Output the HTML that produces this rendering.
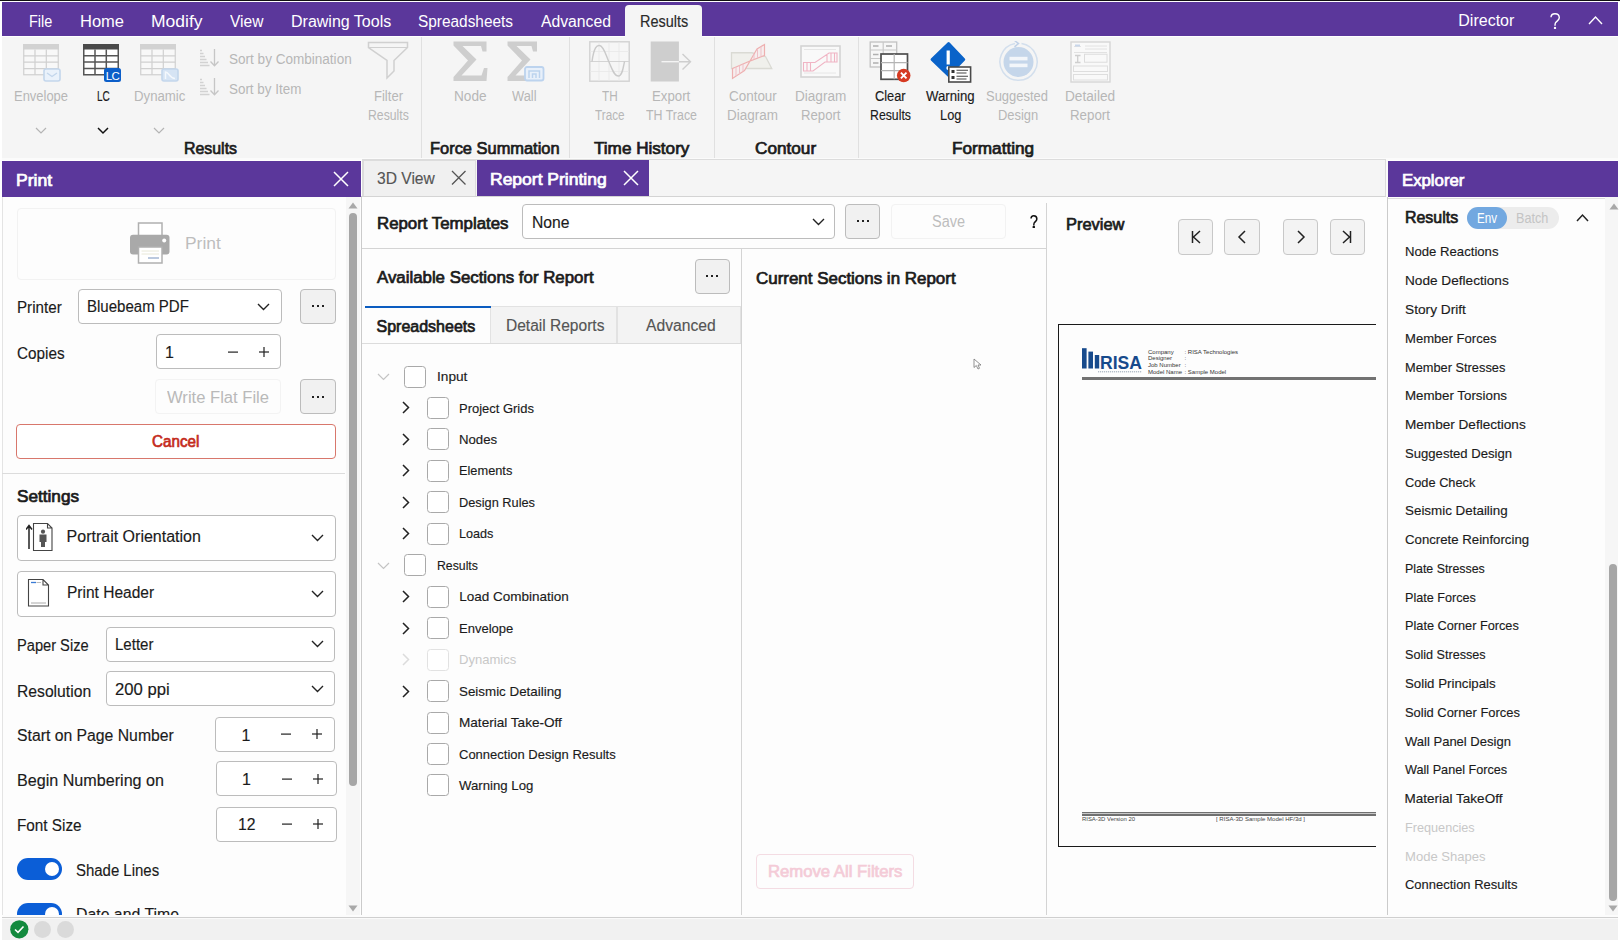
<!DOCTYPE html>
<html><head><meta charset="utf-8"><style>
html,body{margin:0;padding:0;}
body{width:1620px;height:941px;position:relative;overflow:hidden;background:#fff;font-family:"Liberation Sans",sans-serif;}
.a{position:absolute;}
.t{line-height:1;white-space:nowrap;transform-origin:0 50%;}
</style></head><body>
<div class="a" style="left:0px;top:0px;width:1620px;height:1px;background:#111;"></div>
<div class="a" style="left:2px;top:2px;width:1616px;height:34px;background:#5b379b;"></div>
<div class="a" style="left:2px;top:37px;width:1616px;height:120.5px;background:#f5f5f5;"></div>
<div class="a t" style="left:29.00px;top:13.96px;font-size:16px;color:#fff;transform:scaleX(0.9037);">File</div>
<div class="a t" style="left:80.00px;top:13.96px;font-size:16px;color:#fff;transform:scaleX(1.0309);">Home</div>
<div class="a t" style="left:151.00px;top:13.96px;font-size:16px;color:#fff;transform:scaleX(1.0928);">Modify</div>
<div class="a t" style="left:229.60px;top:13.96px;font-size:16px;color:#fff;transform:scaleX(0.9711);">View</div>
<div class="a t" style="left:291.00px;top:13.96px;font-size:16px;color:#fff;">Drawing Tools</div>
<div class="a t" style="left:418.00px;top:13.96px;font-size:16px;color:#fff;transform:scaleX(0.9621);">Spreadsheets</div>
<div class="a t" style="left:541.00px;top:13.96px;font-size:16px;color:#fff;transform:scaleX(0.9836);">Advanced</div>
<div class="a" style="left:625px;top:5px;width:77px;height:32px;background:#f5f5f5;border-radius:4px 4px 0 0;"></div>
<div class="a t" style="left:639.50px;top:13.96px;font-size:16px;color:#2a2a2a;-webkit-text-stroke:0.15px #2a2a2a;transform:scaleX(0.9034);">Results</div>
<div class="a t" style="left:1458.30px;top:13.46px;font-size:16px;color:#fff;">Director</div>
<svg class="a" style="left:1550px;top:12.7px;" width="10" height="16.2" viewBox="0 0 10 16.2"><path d="M1.0,4.374 C1.0,1.62 3.0,0.7 5.0,0.7 C7.5,0.7 9.3,1.944 9.3,4.859999999999999 C9.3,7.29 6.2,8.424 5.5,9.719999999999999 C5.0,10.692 5.0,11.339999999999998 5.0,12.636" fill="none" stroke="#fff" stroke-width="1.4"/><circle cx="5.0" cy="15.01" r="1.19" fill="#fff"/></svg>
<svg class="a" style="left:1586.8px;top:15.0px;" width="17" height="11" viewBox="0 0 17 11"><polyline points="2,9 8.5,2 15,9" fill="none" stroke="#fff" stroke-width="1.4"/></svg>
<svg class="a" style="left:23px;top:43.5px;" width="36" height="32" viewBox="0 0 36 32"><rect x="0.75" y="0.75" width="34.5" height="30" fill="#f8f8f8" stroke="#d0d0d0" stroke-width="1.2"/><rect x="0" y="0" width="36" height="5.5" fill="#d2d2d2"/><path d="M0.75,11.8H35.25M0.75,18.1H35.25M0.75,24.6H35.25M12,5.5V30.75M23.3,5.5V30.75" stroke="#d0d0d0" stroke-width="1.2" fill="none"/></svg>
<svg class="a" style="left:43px;top:68px;" width="18" height="14" viewBox="0 0 18 14"><rect x="1" y="1" width="16" height="12" rx="2" fill="#eaf2fb" stroke="#c3d6ec" stroke-width="1.6"/><polyline points="4,5 9,8.5 14,5" fill="none" stroke="#c3d6ec" stroke-width="1.4"/></svg>
<svg class="a" style="left:83px;top:43.5px;" width="36" height="32" viewBox="0 0 36 32"><rect x="0.75" y="0.75" width="34.5" height="30" fill="#ffffff" stroke="#555555" stroke-width="1.5"/><rect x="0" y="0" width="36" height="5.5" fill="#4a4a4a"/><path d="M0.75,11.8H35.25M0.75,18.1H35.25M0.75,24.6H35.25M12,5.5V30.75M23.3,5.5V30.75" stroke="#555555" stroke-width="1.5" fill="none"/></svg>
<svg class="a" style="left:104px;top:67.5px;" width="17" height="14" viewBox="0 0 17 14"><rect x="0" y="0" width="17" height="14" rx="2.5" fill="#0b5ec9"/><text x="8.5" y="11.6" font-family="Liberation Sans" font-size="11.5" fill="#fff" text-anchor="middle" letter-spacing="-0.6">LC</text></svg>
<svg class="a" style="left:140px;top:43.5px;" width="36" height="32" viewBox="0 0 36 32"><rect x="0.75" y="0.75" width="34.5" height="30" fill="#f8f8f8" stroke="#d0d0d0" stroke-width="1.2"/><rect x="0" y="0" width="36" height="5.5" fill="#d2d2d2"/><path d="M0.75,11.8H35.25M0.75,18.1H35.25M0.75,24.6H35.25M12,5.5V30.75M23.3,5.5V30.75" stroke="#d0d0d0" stroke-width="1.2" fill="none"/></svg>
<svg class="a" style="left:160.5px;top:68px;" width="18" height="14" viewBox="0 0 18 14"><rect x="1" y="1" width="16" height="12" rx="2" fill="#d6e4f4" stroke="#c3d6ec" stroke-width="1.6"/><path d="M4.5,11 V4 C8,4 8,10 14,10.5" fill="none" stroke="#f4f8fc" stroke-width="1.5"/></svg>
<div class="a t" style="left:14.00px;top:88.65px;font-size:14px;color:#b7b7b7;transform:scaleX(0.9250);">Envelope</div>
<div class="a t" style="left:96.60px;top:88.65px;font-size:14px;color:#1b1b1b;-webkit-text-stroke:0.15px #1b1b1b;transform:scaleX(0.7152);">LC</div>
<div class="a t" style="left:133.70px;top:88.65px;font-size:14px;color:#b7b7b7;transform:scaleX(0.9439);">Dynamic</div>
<svg class="a" style="left:34.0px;top:125.5px;" width="14" height="9" viewBox="0 0 14 9"><polyline points="2,2 7.0,7 12,2" fill="none" stroke="#b4b4b4" stroke-width="1.2"/></svg>
<svg class="a" style="left:96.0px;top:125.5px;" width="14" height="9" viewBox="0 0 14 9"><polyline points="2,2 7.0,7 12,2" fill="none" stroke="#111" stroke-width="1.45"/></svg>
<svg class="a" style="left:152.0px;top:125.5px;" width="14" height="9" viewBox="0 0 14 9"><polyline points="2,2 7.0,7 12,2" fill="none" stroke="#b4b4b4" stroke-width="1.2"/></svg>
<svg class="a" style="left:199px;top:48px;" width="21" height="20" viewBox="0 0 21 20"><path d="M1,2.5H3 M1,5.5H4.5 M1,8.5H6 M1,11.5H7.5 M1,14.5H9 M1,17.5H10.5" stroke="#d2d2d2" stroke-width="1.3"/><path d="M15.5,1V17.5 M11.5,13.5L15.5,17.8L19.5,13.5" stroke="#c6c6c6" stroke-width="1.3" fill="none"/></svg>
<svg class="a" style="left:199px;top:77px;" width="21" height="20" viewBox="0 0 21 20"><path d="M1,2.5H3 M1,5.5H4.5 M1,8.5H6 M1,11.5H7.5 M1,14.5H9 M1,17.5H10.5" stroke="#d2d2d2" stroke-width="1.3"/><path d="M15.5,1V17.5 M11.5,13.5L15.5,17.8L19.5,13.5" stroke="#c6c6c6" stroke-width="1.3" fill="none"/></svg>
<div class="a t" style="left:228.80px;top:51.85px;font-size:14px;color:#b7b7b7;transform:scaleX(0.9673);">Sort by Combination</div>
<div class="a t" style="left:228.80px;top:81.85px;font-size:14px;color:#b7b7b7;transform:scaleX(0.9580);">Sort by Item</div>
<svg class="a" style="left:367px;top:41px;" width="43" height="41" viewBox="0 0 43 41"><path d="M1.5,1.5H40.5V6.5L27,19.5V30L20,37V19.5L1.5,6.5Z" fill="none" stroke="#d0d0d0" stroke-width="1.5" stroke-linejoin="miter"/><path d="M1.5,6.5H40.5" stroke="#d0d0d0" stroke-width="1.2"/></svg>
<div class="a t" style="left:374.30px;top:89.35px;font-size:14px;color:#b7b7b7;transform:scaleX(0.9321);">Filter</div>
<div class="a t" style="left:368.40px;top:108.35px;font-size:14px;color:#b7b7b7;transform:scaleX(0.8740);">Results</div>
<div class="a t" style="left:184.00px;top:140.56px;font-size:16px;color:#1b1b1b;-webkit-text-stroke:0.7px #1b1b1b;transform:scaleX(0.9934);">Results</div>
<div class="a" style="left:421px;top:37px;width:1px;height:121px;background:#e0e0e0;"></div>
<div class="a" style="left:569px;top:37px;width:1px;height:121px;background:#e0e0e0;"></div>
<div class="a" style="left:714px;top:37px;width:1px;height:121px;background:#e0e0e0;"></div>
<div class="a" style="left:857.5px;top:37px;width:1px;height:121px;background:#e0e0e0;"></div>
<svg class="a" style="left:453px;top:41px;" width="35" height="41" viewBox="0 0 35 41"><path d="M0.5,0.5H33.5V10.5H29.5L28,5H9.5L23.5,18.5L8.5,34.5H28.5L31,27H34.5L33.5,40H0.5V36L15,19.5L0.5,4.5Z" fill="#cecece"/></svg>
<svg class="a" style="left:506.5px;top:41px;" width="31.5" height="41" viewBox="0 0 31.5 41"><path d="M0.5,0.5H30.0V10.5H26.0L24.5,5H9.5L23.5,18.5L8.5,34.5H25.0L27.5,27H31.0L30.0,40H0.5V36L15,19.5L0.5,4.5Z" fill="#cecece"/></svg>
<svg class="a" style="left:524px;top:66px;" width="20.5" height="15.5" viewBox="0 0 20.5 15.5"><rect x="1" y="1" width="18.5" height="13.5" rx="2" fill="#e8f0fa" stroke="#bcd3ee" stroke-width="1.8"/><path d="M5,12V5H15.5V12 M8.5,12V8H12V12" fill="none" stroke="#bcd3ee" stroke-width="1.5"/></svg>
<div class="a t" style="left:453.70px;top:89.45px;font-size:14px;color:#b7b7b7;transform:scaleX(0.9740);">Node</div>
<div class="a t" style="left:511.70px;top:89.45px;font-size:14px;color:#b7b7b7;transform:scaleX(0.9213);">Wall</div>
<div class="a t" style="left:430.20px;top:140.56px;font-size:16px;color:#1b1b1b;-webkit-text-stroke:0.7px #1b1b1b;transform:scaleX(1.0264);">Force Summation</div>
<svg class="a" style="left:589px;top:41px;" width="41" height="41" viewBox="0 0 41 41"><rect x="0.8" y="0.8" width="39.4" height="39.4" fill="#f6f6f6" stroke="#d2d2d2" stroke-width="1.4"/><path d="M10,1V40M20,1V40M30,1V40M1,10.5H40M1,30.5H40" stroke="#e8e8e8" stroke-width="0.8"/><path d="M1,20.5H40" stroke="#d4d4d4" stroke-width="1"/><path d="M3,20.5 C5,6 8,4 10.5,4.5 C15,5 17,15 20,21 C23,28 25,35 29.5,35 C33,35 34,28 35.5,20.5" fill="none" stroke="#cacaca" stroke-width="1.4"/></svg>
<svg class="a" style="left:650px;top:41px;" width="42" height="41" viewBox="0 0 42 41"><rect x="0.7" y="0.5" width="28.2" height="40" fill="#cecece"/><path d="M11.5,20.7H40" stroke="#f6f6f6" stroke-width="1.3"/><path d="M28.9,20.7H40.5 M32.5,13L40.5,20.7L32.5,28.5" stroke="#cecece" stroke-width="1.4" fill="none"/></svg>
<div class="a t" style="left:601.55px;top:89.45px;font-size:14px;color:#b7b7b7;transform:scaleX(0.8413);">TH</div>
<div class="a t" style="left:595.00px;top:107.95px;font-size:14px;color:#b7b7b7;transform:scaleX(0.8393);">Trace</div>
<div class="a t" style="left:652.35px;top:89.45px;font-size:14px;color:#b7b7b7;transform:scaleX(0.9465);">Export</div>
<div class="a t" style="left:645.90px;top:107.95px;font-size:14px;color:#b7b7b7;transform:scaleX(0.8859);">TH Trace</div>
<div class="a t" style="left:594.00px;top:140.56px;font-size:16px;color:#1b1b1b;-webkit-text-stroke:0.7px #1b1b1b;transform:scaleX(1.0696);">Time History</div>
<svg class="a" style="left:730px;top:43px;" width="43" height="38" viewBox="0 0 43 38"><path d="M1.5,9.75 L22,9.75 L35.5,13.5 L41.75,25.5 L1.5,25.5 Z" fill="#f0f0ec" stroke="#dadad4" stroke-width="1.3"/><path d="M2.5,25.5 L20,18 L14.5,27.5 L2.5,35.5 Z M20,18 L27,6 L34.5,1.5 L34.5,12.5 Z" fill="#f6eeee" stroke="#eeb0b0" stroke-width="1.2"/><path d="M6,24V33 M9.5,22.5V31 M13,21V28.5 M24,11V16.5 M27.5,6V15 M31,3.5V13.5" stroke="#efc0c8" stroke-width="1"/></svg>
<svg class="a" style="left:799.5px;top:44.5px;" width="41" height="33" viewBox="0 0 41 33"><rect x="1" y="1" width="39" height="31" fill="#f9f9f9" stroke="#d4d4d4" stroke-width="1.6"/><path d="M4,4.5H36 M4,28H36" stroke="#e6e6e6" stroke-width="1"/><path d="M3.5,17.5H15L29,8H37V17H25L13,26H3.5Z M7,17.5V26 M10.5,17.5V26 M27,9V17 M31,8V17 M34.5,8V17" fill="none" stroke="#f0b4c4" stroke-width="1.1"/></svg>
<div class="a t" style="left:728.50px;top:89.45px;font-size:14px;color:#b7b7b7;transform:scaleX(0.9597);">Contour</div>
<div class="a t" style="left:726.75px;top:107.95px;font-size:14px;color:#b7b7b7;transform:scaleX(0.9621);">Diagram</div>
<div class="a t" style="left:794.75px;top:89.45px;font-size:14px;color:#b7b7b7;transform:scaleX(0.9696);">Diagram</div>
<div class="a t" style="left:801.05px;top:107.95px;font-size:14px;color:#b7b7b7;transform:scaleX(0.9400);">Report</div>
<div class="a t" style="left:755.45px;top:140.56px;font-size:16px;color:#1b1b1b;-webkit-text-stroke:0.7px #1b1b1b;transform:scaleX(1.0734);">Contour</div>
<svg class="a" style="left:869px;top:40.5px;" width="44" height="44" viewBox="0 0 44 44"><rect x="1.2" y="1" width="26.5" height="25" fill="#f7f7f7" stroke="#c2c2c2" stroke-width="1.3"/><path d="M1.2,9H27.7M1.2,17.5H27.7M14.2,1V26" stroke="#c8c8c8" stroke-width="1.2"/><path d="M4,5H9.5M17,5H23M4,13.5H9.5M4,22H9.5" stroke="#b0b0b0" stroke-width="1.6"/><rect x="12" y="13" width="26.5" height="25.3" fill="#fff" stroke="#4e4e4e" stroke-width="1.7"/><path d="M12,21.6H38.5M12,29.7H38.5M25.2,13V38.3" stroke="#b4b4b4" stroke-width="1.2"/><circle cx="34.7" cy="34.5" r="6.8" fill="#d63a22"/><path d="M31.9,31.7L37.5,37.3M37.5,31.7L31.9,37.3" stroke="#fff" stroke-width="1.9"/></svg>
<svg class="a" style="left:929px;top:40.5px;" width="43" height="42" viewBox="0 0 43 42"><path d="M18.6,1.5 Q19.5,0.5 20.6,1.5 L35.8,17.5 Q36.8,18.6 35.8,19.6 L20.6,35.3 Q19.5,36.4 18.4,35.3 L2,19.6 Q1,18.6 2,17.5Z" fill="#0a63c9"/><rect x="17.6" y="9.5" width="3.2" height="14" fill="#fff"/><circle cx="19.2" cy="27" r="1.9" fill="#fff"/><rect x="19.8" y="26" width="21.8" height="15" fill="#fff" stroke="#4a4a4a" stroke-width="1.6"/><rect x="22.5" y="29" width="3" height="3" fill="#333"/><rect x="22.5" y="35" width="3" height="3" fill="#333"/><path d="M27.5,29.3H39M27.5,32H37.5M27.5,35.3H39M27.5,38H37.5" stroke="#444" stroke-width="1.1"/></svg>
<div class="a t" style="left:875.40px;top:89.45px;font-size:14px;color:#1b1b1b;-webkit-text-stroke:0.15px #1b1b1b;transform:scaleX(0.9146);">Clear</div>
<div class="a t" style="left:870.00px;top:107.95px;font-size:14px;color:#1b1b1b;-webkit-text-stroke:0.15px #1b1b1b;transform:scaleX(0.8783);">Results</div>
<div class="a t" style="left:925.65px;top:89.45px;font-size:14px;color:#1b1b1b;-webkit-text-stroke:0.15px #1b1b1b;transform:scaleX(0.9436);">Warning</div>
<div class="a t" style="left:939.60px;top:107.95px;font-size:14px;color:#1b1b1b;-webkit-text-stroke:0.15px #1b1b1b;transform:scaleX(0.9161);">Log</div>
<svg class="a" style="left:997.5px;top:41px;" width="42" height="42" viewBox="0 0 42 42"><path d="M23.5,2.4 A18.6,18.6 0 1 1 17,2.5" fill="none" stroke="#d3dfed" stroke-width="1.5"/><path d="M16.5,-0.5L20.5,2.6L16.5,5.8" fill="none" stroke="#c0d1e7" stroke-width="1.5"/><circle cx="20.5" cy="21" r="15" fill="#c5d6ea"/><rect x="11.5" y="15.8" width="18" height="3.6" fill="#f3f6fa"/><rect x="11.5" y="22.6" width="18" height="3.6" fill="#f3f6fa"/></svg>
<svg class="a" style="left:1069.5px;top:40.5px;" width="42" height="42" viewBox="0 0 42 42"><rect x="1" y="1" width="39" height="40" fill="#f9f9f9" stroke="#d6d6d6" stroke-width="1.4"/><path d="M4,5.5H11 M15,5H37 M15,8H37 M4,11.5H37" stroke="#e2e2e2" stroke-width="1"/><path d="M5,4.5H10" stroke="#c8d6ea" stroke-width="2"/><path d="M5,14.5H10.5M7.7,14.5V21.5M5,21.5H10.5" stroke="#cfcfcf" stroke-width="1.3"/><rect x="14.5" y="13.2" width="22.5" height="8" fill="none" stroke="#dcdcdc" stroke-width="1"/><rect x="3.5" y="25" width="34" height="5.5" fill="none" stroke="#dedede" stroke-width="1"/><rect x="3.5" y="33.5" width="34" height="5.5" fill="none" stroke="#dedede" stroke-width="1"/></svg>
<div class="a t" style="left:986.45px;top:89.45px;font-size:14px;color:#b7b7b7;transform:scaleX(0.9246);">Suggested</div>
<div class="a t" style="left:997.50px;top:107.95px;font-size:14px;color:#b7b7b7;transform:scaleX(0.9224);">Design</div>
<div class="a t" style="left:1064.65px;top:89.45px;font-size:14px;color:#b7b7b7;transform:scaleX(0.9753);">Detailed</div>
<div class="a t" style="left:1070.00px;top:107.95px;font-size:14px;color:#b7b7b7;transform:scaleX(0.9519);">Report</div>
<div class="a t" style="left:952.25px;top:140.56px;font-size:16px;color:#1b1b1b;-webkit-text-stroke:0.7px #1b1b1b;transform:scaleX(1.0736);">Formatting</div>
<div class="a" style="left:2px;top:157.5px;width:1616px;height:2px;background:#fbfbfb;"></div>
<div class="a" style="left:362px;top:159px;width:1024px;height:38px;background:#f5f5f5;border:1px solid #dcdcdc;box-sizing:border-box;"></div>
<div class="a" style="left:2px;top:161px;width:359px;height:36px;background:#5b379b;"></div>
<div class="a t" style="left:16.30px;top:173.36px;font-size:16px;color:#fff;-webkit-text-stroke:0.7px #fff;transform:scaleX(1.0973);">Print</div>
<svg class="a" style="left:333.0px;top:171.0px;" width="16" height="16" viewBox="0 0 16 16"><path d="M1,1 L15,15 M15,1 L1,15" stroke="#fff" stroke-width="1.5"/></svg>
<div class="a" style="left:2px;top:197px;width:359px;height:720px;background:#fdfdfd;"></div>
<div class="a" style="left:2px;top:197px;width:1px;height:720px;background:#e4e4e4;"></div>
<div class="a" style="left:345.5px;top:197px;width:14.5px;height:718px;background:#f6f6f6;"></div>
<svg class="a" style="left:348px;top:202px;" width="10" height="7" viewBox="0 0 10 7"><path d="M0.5,6.5L5,0.5L9.5,6.5Z" fill="#a8a8a8"/></svg>
<div class="a" style="left:349px;top:213px;width:7.5px;height:573px;background:#a6a6a6;border-radius:4px;"></div>
<svg class="a" style="left:348px;top:905.3px;" width="10" height="7" viewBox="0 0 10 7"><path d="M0.5,0.5L5,6.5L9.5,0.5Z" fill="#a8a8a8"/></svg>
<div class="a" style="left:16.5px;top:208px;width:319px;height:72px;border:1px solid #f2f2f2;box-sizing:border-box;border-radius:4px;"></div>
<svg class="a" style="left:128.5px;top:221.5px;" width="43" height="43" viewBox="0 0 43 43"><rect x="9.5" y="1" width="23.5" height="13" fill="#fff" stroke="#b0b0b0" stroke-width="1.5"/><rect x="1" y="12.8" width="39.5" height="19.7" rx="3" fill="#a9a9a9"/><circle cx="35.2" cy="18.4" r="2" fill="#fff"/><rect x="9.5" y="25" width="23.5" height="16" fill="#fff" stroke="#b0b0b0" stroke-width="1.5"/><path d="M12.5,29H30 M12.5,32H30" stroke="#e8e8d8" stroke-width="1"/><path d="M19,36H30" stroke="#8da4c8" stroke-width="1.2"/></svg>
<div class="a t" style="left:185.20px;top:235.96px;font-size:16px;color:#bdbdbd;transform:scaleX(1.0881);">Print</div>
<div class="a t" style="left:17.20px;top:300.46px;font-size:16px;color:#1b1b1b;-webkit-text-stroke:0.15px #1b1b1b;transform:scaleX(0.9485);">Printer</div>
<div class="a" style="left:77.5px;top:289px;width:204px;height:35px;background:#fff;border:1px solid #bcbcbc;box-sizing:border-box;border-radius:4px;"></div>
<div class="a t" style="left:86.50px;top:299.46px;font-size:16px;color:#1b1b1b;-webkit-text-stroke:0.15px #1b1b1b;transform:scaleX(0.9392);">Bluebeam PDF</div>
<svg class="a" style="left:256.1px;top:301.75px;" width="15" height="9.5" viewBox="0 0 15 9.5"><polyline points="2,2 7.5,7.5 13,2" fill="none" stroke="#222" stroke-width="1.4"/></svg>
<div class="a" style="left:300.2px;top:289px;width:35.5px;height:35px;background:#f1f1f1;border:1px solid #bcbcbc;box-sizing:border-box;border-radius:4px;"></div>
<svg class="a" style="left:312px;top:305px;" width="12" height="2" viewBox="0 0 12 2"><rect x="0" y="0" width="2" height="2" fill="#222"/><rect x="5" y="0" width="2" height="2" fill="#222"/><rect x="10" y="0" width="2" height="2" fill="#222"/></svg>
<div class="a t" style="left:16.80px;top:346.26px;font-size:16px;color:#1b1b1b;-webkit-text-stroke:0.15px #1b1b1b;transform:scaleX(0.9557);">Copies</div>
<div class="a" style="left:156.2px;top:334px;width:125.2px;height:35.3px;background:#fff;border:1px solid #bcbcbc;box-sizing:border-box;border-radius:4px;"></div>
<div class="a t" style="left:165.00px;top:345.11px;font-size:16px;color:#1b1b1b;-webkit-text-stroke:0.15px #1b1b1b;">1</div>
<svg class="a" style="left:228px;top:351px;" width="10" height="2" viewBox="0 0 10 2"><rect x="0" y="0.5" width="10" height="1.2" fill="#222"/></svg>
<svg class="a" style="left:259px;top:347px;" width="10" height="10" viewBox="0 0 10 10"><rect x="0" y="4.4" width="10" height="1.2" fill="#222"/><rect x="4.4" y="0" width="1.2" height="10" fill="#222"/></svg>
<div class="a" style="left:155px;top:379px;width:126px;height:35.3px;border:1px solid #f3f3f3;box-sizing:border-box;border-radius:4px;"></div>
<div class="a t" style="left:167.30px;top:389.56px;font-size:16px;color:#b9b9b9;transform:scaleX(1.0367);">Write Flat File</div>
<div class="a" style="left:300.2px;top:379px;width:35.5px;height:35.3px;background:#f1f1f1;border:1px solid #bcbcbc;box-sizing:border-box;border-radius:4px;"></div>
<svg class="a" style="left:312px;top:396px;" width="12" height="2" viewBox="0 0 12 2"><rect x="0" y="0" width="2" height="2" fill="#222"/><rect x="5" y="0" width="2" height="2" fill="#222"/><rect x="10" y="0" width="2" height="2" fill="#222"/></svg>
<div class="a" style="left:16px;top:423.8px;width:319.6px;height:35.6px;background:#fff;border:1px solid #d8776c;box-sizing:border-box;border-radius:4px;"></div>
<div class="a t" style="left:151.75px;top:434.36px;font-size:16px;color:#c42b1c;-webkit-text-stroke:0.7px #c42b1c;transform:scaleX(0.9497);">Cancel</div>
<div class="a" style="left:2px;top:473px;width:343px;height:1px;background:#dcdcdc;"></div>
<div class="a t" style="left:16.70px;top:488.86px;font-size:16px;color:#1b1b1b;-webkit-text-stroke:0.7px #1b1b1b;transform:scaleX(1.0724);">Settings</div>
<div class="a" style="left:16.5px;top:514.8px;width:319px;height:46px;background:#fff;border:1px solid #bcbcbc;box-sizing:border-box;border-radius:4px;"></div>
<div class="a t" style="left:66.60px;top:529.16px;font-size:16px;color:#1b1b1b;-webkit-text-stroke:0.15px #1b1b1b;">Portrait Orientation</div>
<svg class="a" style="left:309.5px;top:533.05px;" width="15" height="9.5" viewBox="0 0 15 9.5"><polyline points="2,2 7.5,7.5 13,2" fill="none" stroke="#222" stroke-width="1.4"/></svg>
<svg class="a" style="left:26px;top:522px;" width="28" height="30" viewBox="0 0 28 30"><path d="M3,27V4 M0,7.5L3,3.5L6,7.5" fill="none" stroke="#222" stroke-width="1.5"/><path d="M7.5,1.5H21.5L26,6V28.5H7.5Z M21.5,1.5V6H26" fill="#fff" stroke="#444" stroke-width="1.1"/><circle cx="17" cy="9.7" r="2.1" fill="#555"/><path d="M13.5,12.5H20.5V20H19V25H15V20H13.5Z" fill="#555"/></svg>
<div class="a" style="left:16.5px;top:570.5px;width:319px;height:46px;background:#fff;border:1px solid #bcbcbc;box-sizing:border-box;border-radius:4px;"></div>
<div class="a t" style="left:66.60px;top:584.86px;font-size:16px;color:#1b1b1b;-webkit-text-stroke:0.15px #1b1b1b;transform:scaleX(0.9697);">Print Header</div>
<svg class="a" style="left:309.5px;top:588.75px;" width="15" height="9.5" viewBox="0 0 15 9.5"><polyline points="2,2 7.5,7.5 13,2" fill="none" stroke="#222" stroke-width="1.4"/></svg>
<svg class="a" style="left:27px;top:578px;" width="24" height="30" viewBox="0 0 24 30"><path d="M1.5,1.5H16L21.5,7V28H1.5Z M16,1.5V7H21.5" fill="#fff" stroke="#444" stroke-width="1.1"/><path d="M4,4.5H9" stroke="#3a7bd5" stroke-width="1.3"/><path d="M9.5,4.5H14" stroke="#bbb" stroke-width="1"/><path d="M4,25H19" stroke="#aaa" stroke-width="1"/></svg>
<div class="a t" style="left:16.50px;top:638.46px;font-size:16px;color:#1b1b1b;-webkit-text-stroke:0.15px #1b1b1b;transform:scaleX(0.9148);">Paper Size</div>
<div class="a" style="left:105.6px;top:626.6px;width:229.8px;height:35px;background:#fff;border:1px solid #bcbcbc;box-sizing:border-box;border-radius:4px;"></div>
<div class="a t" style="left:115.20px;top:637.06px;font-size:16px;color:#1b1b1b;-webkit-text-stroke:0.15px #1b1b1b;transform:scaleX(0.9410);">Letter</div>
<svg class="a" style="left:310.3px;top:639.35px;" width="15" height="9.5" viewBox="0 0 15 9.5"><polyline points="2,2 7.5,7.5 13,2" fill="none" stroke="#222" stroke-width="1.4"/></svg>
<div class="a t" style="left:16.50px;top:683.76px;font-size:16px;color:#1b1b1b;-webkit-text-stroke:0.15px #1b1b1b;transform:scaleX(0.9801);">Resolution</div>
<div class="a" style="left:105.6px;top:671.3px;width:229.8px;height:35px;background:#fff;border:1px solid #bcbcbc;box-sizing:border-box;border-radius:4px;"></div>
<div class="a t" style="left:114.70px;top:681.76px;font-size:16px;color:#1b1b1b;-webkit-text-stroke:0.15px #1b1b1b;transform:scaleX(1.0401);">200 ppi</div>
<svg class="a" style="left:310.3px;top:684.05px;" width="15" height="9.5" viewBox="0 0 15 9.5"><polyline points="2,2 7.5,7.5 13,2" fill="none" stroke="#222" stroke-width="1.4"/></svg>
<div class="a t" style="left:16.80px;top:728.26px;font-size:16px;color:#1b1b1b;-webkit-text-stroke:0.15px #1b1b1b;transform:scaleX(0.9849);">Start on Page Number</div>
<div class="a" style="left:214.7px;top:716.6px;width:120.7px;height:35px;background:#fff;border:1px solid #bcbcbc;box-sizing:border-box;border-radius:4px;"></div>
<div class="a t" style="left:241.55px;top:727.56px;font-size:16px;color:#1b1b1b;-webkit-text-stroke:0.15px #1b1b1b;">1</div>
<svg class="a" style="left:281px;top:733px;" width="10" height="2" viewBox="0 0 10 2"><rect x="0" y="0.5" width="10" height="1.2" fill="#222"/></svg>
<svg class="a" style="left:312px;top:729px;" width="10" height="10" viewBox="0 0 10 10"><rect x="0" y="4.4" width="10" height="1.2" fill="#222"/><rect x="4.4" y="0" width="1.2" height="10" fill="#222"/></svg>
<div class="a t" style="left:17.20px;top:773.16px;font-size:16px;color:#1b1b1b;-webkit-text-stroke:0.15px #1b1b1b;transform:scaleX(1.0077);">Begin Numbering on</div>
<div class="a" style="left:215.6px;top:761.3px;width:121px;height:35.2px;background:#fff;border:1px solid #bcbcbc;box-sizing:border-box;border-radius:4px;"></div>
<div class="a t" style="left:242.05px;top:772.36px;font-size:16px;color:#1b1b1b;-webkit-text-stroke:0.15px #1b1b1b;">1</div>
<svg class="a" style="left:282px;top:778px;" width="10" height="2" viewBox="0 0 10 2"><rect x="0" y="0.5" width="10" height="1.2" fill="#222"/></svg>
<svg class="a" style="left:313px;top:774px;" width="10" height="10" viewBox="0 0 10 10"><rect x="0" y="4.4" width="10" height="1.2" fill="#222"/><rect x="4.4" y="0" width="1.2" height="10" fill="#222"/></svg>
<div class="a t" style="left:16.50px;top:818.16px;font-size:16px;color:#1b1b1b;-webkit-text-stroke:0.15px #1b1b1b;transform:scaleX(0.9558);">Font Size</div>
<div class="a" style="left:215.6px;top:806.5px;width:121px;height:35px;background:#fff;border:1px solid #bcbcbc;box-sizing:border-box;border-radius:4px;"></div>
<div class="a t" style="left:238.25px;top:817.46px;font-size:16px;color:#1b1b1b;-webkit-text-stroke:0.15px #1b1b1b;transform:scaleX(0.9833);">12</div>
<svg class="a" style="left:282px;top:823px;" width="10" height="2" viewBox="0 0 10 2"><rect x="0" y="0.5" width="10" height="1.2" fill="#222"/></svg>
<svg class="a" style="left:313px;top:819px;" width="10" height="10" viewBox="0 0 10 10"><rect x="0" y="4.4" width="10" height="1.2" fill="#222"/><rect x="4.4" y="0" width="1.2" height="10" fill="#222"/></svg>
<div class="a" style="left:17.2px;top:858.3px;width:45px;height:22px;background:#0b5ed7;border-radius:11px;"></div>
<div class="a" style="left:44.7px;top:862.3px;width:14px;height:14px;background:#fff;border-radius:7px;"></div>
<div class="a t" style="left:76.20px;top:863.16px;font-size:16px;color:#1b1b1b;-webkit-text-stroke:0.15px #1b1b1b;transform:scaleX(0.9341);">Shade Lines</div>
<div class="a" style="left:2px;top:897px;width:343px;height:20px;overflow:hidden">
<div class="a" style="left:15.2px;top:6.4px;width:45px;height:22px;background:#0b5ed7;border-radius:11px;"></div>
<div class="a" style="left:42.7px;top:10.4px;width:14px;height:14px;background:#fff;border-radius:7px;"></div>
<div class="a t" style="left:74.20px;top:10.16px;font-size:16px;color:#1b1b1b;-webkit-text-stroke:0.15px #1b1b1b;transform:scaleX(0.9898);">Date and Time</div>
</div>
<div class="a" style="left:363px;top:159.5px;width:113px;height:37px;background:#f0f0f0;border:1px solid #dcdcdc;box-sizing:border-box;"></div>
<div class="a t" style="left:376.70px;top:171.26px;font-size:16px;color:#555;-webkit-text-stroke:0.15px #555;transform:scaleX(0.9748);">3D View</div>
<svg class="a" style="left:450.75px;top:169.95px;" width="15.5" height="15.5" viewBox="0 0 15.5 15.5"><path d="M1,1 L14.5,14.5 M14.5,1 L1,14.5" stroke="#555" stroke-width="1.3"/></svg>
<div class="a" style="left:477px;top:160.3px;width:172px;height:35.7px;background:#5b379b;"></div>
<div class="a t" style="left:490.00px;top:171.56px;font-size:16px;color:#fff;-webkit-text-stroke:0.7px #fff;transform:scaleX(1.0935);">Report Printing</div>
<svg class="a" style="left:623.2px;top:170.0px;" width="16" height="16" viewBox="0 0 16 16"><path d="M1,1 L15,15 M15,1 L1,15" stroke="#fff" stroke-width="1.5"/></svg>
<div class="a" style="left:362px;top:196px;width:1026px;height:1px;background:#d4d4d4;"></div>
<div class="a" style="left:362px;top:197px;width:1025px;height:720px;background:#fdfdfd;"></div>
<div class="a" style="left:361px;top:196px;width:1px;height:721px;background:#cbcbcb;"></div>
<div class="a" style="left:1387px;top:197px;width:1px;height:720px;background:#cbcbcb;"></div>
<div class="a" style="left:1386px;top:159px;width:2px;height:38px;background:#fbfbfb;"></div>
<div class="a t" style="left:376.50px;top:216.16px;font-size:16px;color:#1b1b1b;-webkit-text-stroke:0.7px #1b1b1b;transform:scaleX(1.0511);">Report Templates</div>
<div class="a" style="left:522.3px;top:203.5px;width:313.2px;height:35.3px;background:#fff;border:1px solid #bcbcbc;box-sizing:border-box;border-radius:4px;"></div>
<div class="a t" style="left:531.50px;top:214.56px;font-size:16px;color:#1b1b1b;-webkit-text-stroke:0.15px #1b1b1b;transform:scaleX(0.9804);">None</div>
<svg class="a" style="left:810.5px;top:216.75px;" width="15" height="9.5" viewBox="0 0 15 9.5"><polyline points="2,2 7.5,7.5 13,2" fill="none" stroke="#222" stroke-width="1.4"/></svg>
<div class="a" style="left:845px;top:203.6px;width:35.3px;height:35.2px;background:#f1f1f1;border:1px solid #bcbcbc;box-sizing:border-box;border-radius:4px;"></div>
<svg class="a" style="left:857px;top:220px;" width="12" height="2" viewBox="0 0 12 2"><rect x="0" y="0" width="2" height="2" fill="#222"/><rect x="5" y="0" width="2" height="2" fill="#222"/><rect x="10" y="0" width="2" height="2" fill="#222"/></svg>
<div class="a" style="left:891px;top:203.6px;width:115px;height:35.2px;border:1px solid #f2f2f2;box-sizing:border-box;border-radius:4px;"></div>
<div class="a t" style="left:931.70px;top:213.76px;font-size:16px;color:#bdbdbd;transform:scaleX(0.9049);">Save</div>
<svg class="a" style="left:1030px;top:215px;" width="7.6" height="13.4" viewBox="0 0 7.6 13.4"><path d="M1.05,3.6180000000000003 C1.05,1.34 2.28,0.75 3.8,0.75 C5.699999999999999,0.75 6.85,1.6079999999999999 6.85,4.02 C6.85,6.03 4.712,6.968000000000001 4.18,8.04 C3.8,8.844000000000001 3.8,9.379999999999999 3.8,10.452" fill="none" stroke="#111" stroke-width="1.5"/><circle cx="3.8" cy="12.125" r="1.275" fill="#111"/></svg>
<div class="a" style="left:1046px;top:203px;width:1px;height:714px;background:#d4d4d4;"></div>
<div class="a" style="left:362px;top:248px;width:684px;height:1px;background:#d4d4d4;"></div>
<div class="a" style="left:741px;top:249px;width:1px;height:668px;background:#d4d4d4;"></div>
<div class="a t" style="left:376.50px;top:269.66px;font-size:16px;color:#1b1b1b;-webkit-text-stroke:0.7px #1b1b1b;transform:scaleX(1.0517);">Available Sections for Report</div>
<div class="a" style="left:694.8px;top:258.6px;width:35.2px;height:35px;background:#f1f1f1;border:1px solid #bcbcbc;box-sizing:border-box;border-radius:4px;"></div>
<svg class="a" style="left:706px;top:275px;" width="12" height="2" viewBox="0 0 12 2"><rect x="0" y="0" width="2" height="2" fill="#222"/><rect x="5" y="0" width="2" height="2" fill="#222"/><rect x="10" y="0" width="2" height="2" fill="#222"/></svg>
<div class="a" style="left:490.4px;top:305.5px;width:127px;height:38px;background:#f3f3f3;border:1px solid #e2e2e2;box-sizing:border-box;"></div>
<div class="a" style="left:617px;top:305.5px;width:124px;height:38px;background:#f3f3f3;border:1px solid #e2e2e2;box-sizing:border-box;"></div>
<div class="a" style="left:364.6px;top:305.5px;width:126px;height:2px;background:#0b5cc0;"></div>
<div class="a" style="left:362px;top:343px;width:379px;height:1px;background:#dcdcdc;"></div>
<div class="a t" style="left:376.50px;top:319.06px;font-size:16px;color:#1b1b1b;-webkit-text-stroke:0.7px #1b1b1b;">Spreadsheets</div>
<div class="a t" style="left:505.60px;top:317.66px;font-size:16px;color:#555;-webkit-text-stroke:0.15px #555;transform:scaleX(0.9706);">Detail Reports</div>
<div class="a t" style="left:646.30px;top:317.66px;font-size:16px;color:#555;-webkit-text-stroke:0.15px #555;transform:scaleX(0.9794);">Advanced</div>
<svg class="a" style="left:375.8px;top:371.75px;" width="15" height="9.5" viewBox="0 0 15 9.5"><polyline points="2,2 7.5,7.5 13,2" fill="none" stroke="#c4c4c4" stroke-width="1.2"/></svg>
<div class="a" style="left:404.3px;top:365.5px;width:22px;height:22px;background:#fff;border:1px solid #a9a9a9;box-sizing:border-box;border-radius:3.5px;"></div>
<div class="a t" style="left:436.80px;top:370.07px;font-size:13.5px;color:#1b1b1b;-webkit-text-stroke:0.15px #1b1b1b;transform:scaleX(1.0125);">Input</div>
<svg class="a" style="left:401.25px;top:400.46px;" width="9.5" height="15" viewBox="0 0 9.5 15"><polyline points="2,2 7.5,7.5 2,13" fill="none" stroke="#222" stroke-width="1.5"/></svg>
<div class="a" style="left:426.5px;top:396.96px;width:22px;height:22px;background:#fff;border:1px solid #a9a9a9;box-sizing:border-box;border-radius:3.5px;"></div>
<div class="a t" style="left:459.30px;top:401.53px;font-size:13.5px;color:#1b1b1b;-webkit-text-stroke:0.15px #1b1b1b;transform:scaleX(0.9600);">Project Grids</div>
<svg class="a" style="left:401.25px;top:431.92px;" width="9.5" height="15" viewBox="0 0 9.5 15"><polyline points="2,2 7.5,7.5 2,13" fill="none" stroke="#222" stroke-width="1.5"/></svg>
<div class="a" style="left:426.5px;top:428.42px;width:22px;height:22px;background:#fff;border:1px solid #a9a9a9;box-sizing:border-box;border-radius:3.5px;"></div>
<div class="a t" style="left:459.30px;top:432.99px;font-size:13.5px;color:#1b1b1b;-webkit-text-stroke:0.15px #1b1b1b;transform:scaleX(0.9763);">Nodes</div>
<svg class="a" style="left:401.25px;top:463.38px;" width="9.5" height="15" viewBox="0 0 9.5 15"><polyline points="2,2 7.5,7.5 2,13" fill="none" stroke="#222" stroke-width="1.5"/></svg>
<div class="a" style="left:426.5px;top:459.88px;width:22px;height:22px;background:#fff;border:1px solid #a9a9a9;box-sizing:border-box;border-radius:3.5px;"></div>
<div class="a t" style="left:459.30px;top:464.45px;font-size:13.5px;color:#1b1b1b;-webkit-text-stroke:0.15px #1b1b1b;transform:scaleX(0.9471);">Elements</div>
<svg class="a" style="left:401.25px;top:494.84000000000003px;" width="9.5" height="15" viewBox="0 0 9.5 15"><polyline points="2,2 7.5,7.5 2,13" fill="none" stroke="#222" stroke-width="1.5"/></svg>
<div class="a" style="left:426.5px;top:491.34000000000003px;width:22px;height:22px;background:#fff;border:1px solid #a9a9a9;box-sizing:border-box;border-radius:3.5px;"></div>
<div class="a t" style="left:459.30px;top:495.91px;font-size:13.5px;color:#1b1b1b;-webkit-text-stroke:0.15px #1b1b1b;transform:scaleX(0.9466);">Design Rules</div>
<svg class="a" style="left:401.25px;top:526.3px;" width="9.5" height="15" viewBox="0 0 9.5 15"><polyline points="2,2 7.5,7.5 2,13" fill="none" stroke="#222" stroke-width="1.5"/></svg>
<div class="a" style="left:426.5px;top:522.8px;width:22px;height:22px;background:#fff;border:1px solid #a9a9a9;box-sizing:border-box;border-radius:3.5px;"></div>
<div class="a t" style="left:459.30px;top:527.37px;font-size:13.5px;color:#1b1b1b;-webkit-text-stroke:0.15px #1b1b1b;transform:scaleX(0.9352);">Loads</div>
<svg class="a" style="left:375.8px;top:560.51px;" width="15" height="9.5" viewBox="0 0 15 9.5"><polyline points="2,2 7.5,7.5 13,2" fill="none" stroke="#c4c4c4" stroke-width="1.2"/></svg>
<div class="a" style="left:404.3px;top:554.26px;width:22px;height:22px;background:#fff;border:1px solid #a9a9a9;box-sizing:border-box;border-radius:3.5px;"></div>
<div class="a t" style="left:436.80px;top:558.83px;font-size:13.5px;color:#1b1b1b;-webkit-text-stroke:0.15px #1b1b1b;transform:scaleX(0.9086);">Results</div>
<svg class="a" style="left:401.25px;top:589.22px;" width="9.5" height="15" viewBox="0 0 9.5 15"><polyline points="2,2 7.5,7.5 2,13" fill="none" stroke="#222" stroke-width="1.5"/></svg>
<div class="a" style="left:426.5px;top:585.72px;width:22px;height:22px;background:#fff;border:1px solid #a9a9a9;box-sizing:border-box;border-radius:3.5px;"></div>
<div class="a t" style="left:459.30px;top:590.29px;font-size:13.5px;color:#1b1b1b;-webkit-text-stroke:0.15px #1b1b1b;">Load Combination</div>
<svg class="a" style="left:401.25px;top:620.6800000000001px;" width="9.5" height="15" viewBox="0 0 9.5 15"><polyline points="2,2 7.5,7.5 2,13" fill="none" stroke="#222" stroke-width="1.5"/></svg>
<div class="a" style="left:426.5px;top:617.1800000000001px;width:22px;height:22px;background:#fff;border:1px solid #a9a9a9;box-sizing:border-box;border-radius:3.5px;"></div>
<div class="a t" style="left:459.30px;top:621.75px;font-size:13.5px;color:#1b1b1b;-webkit-text-stroke:0.15px #1b1b1b;transform:scaleX(0.9645);">Envelope</div>
<svg class="a" style="left:401.25px;top:652.14px;" width="9.5" height="15" viewBox="0 0 9.5 15"><polyline points="2,2 7.5,7.5 2,13" fill="none" stroke="#dcdcdc" stroke-width="1.5"/></svg>
<div class="a" style="left:426.5px;top:648.64px;width:22px;height:22px;background:#fff;border:1px solid #e2e2e2;box-sizing:border-box;border-radius:3.5px;"></div>
<div class="a t" style="left:459.30px;top:653.21px;font-size:13.5px;color:#c8c8c8;transform:scaleX(0.9669);">Dynamics</div>
<svg class="a" style="left:401.25px;top:683.6px;" width="9.5" height="15" viewBox="0 0 9.5 15"><polyline points="2,2 7.5,7.5 2,13" fill="none" stroke="#222" stroke-width="1.5"/></svg>
<div class="a" style="left:426.5px;top:680.1px;width:22px;height:22px;background:#fff;border:1px solid #a9a9a9;box-sizing:border-box;border-radius:3.5px;"></div>
<div class="a t" style="left:459.30px;top:684.67px;font-size:13.5px;color:#1b1b1b;-webkit-text-stroke:0.15px #1b1b1b;transform:scaleX(0.9899);">Seismic Detailing</div>
<div class="a" style="left:426.5px;top:711.56px;width:22px;height:22px;background:#fff;border:1px solid #a9a9a9;box-sizing:border-box;border-radius:3.5px;"></div>
<div class="a t" style="left:459.30px;top:716.13px;font-size:13.5px;color:#1b1b1b;-webkit-text-stroke:0.15px #1b1b1b;transform:scaleX(1.0059);">Material Take-Off</div>
<div class="a" style="left:426.5px;top:743.02px;width:22px;height:22px;background:#fff;border:1px solid #a9a9a9;box-sizing:border-box;border-radius:3.5px;"></div>
<div class="a t" style="left:459.30px;top:747.59px;font-size:13.5px;color:#1b1b1b;-webkit-text-stroke:0.15px #1b1b1b;transform:scaleX(0.9623);">Connection Design Results</div>
<div class="a" style="left:426.5px;top:774.48px;width:22px;height:22px;background:#fff;border:1px solid #a9a9a9;box-sizing:border-box;border-radius:3.5px;"></div>
<div class="a t" style="left:459.30px;top:779.05px;font-size:13.5px;color:#1b1b1b;-webkit-text-stroke:0.15px #1b1b1b;transform:scaleX(0.9784);">Warning Log</div>
<div class="a t" style="left:755.50px;top:270.96px;font-size:16px;color:#1b1b1b;-webkit-text-stroke:0.7px #1b1b1b;transform:scaleX(1.0587);">Current Sections in Report</div>
<div class="a" style="left:755.5px;top:853.7px;width:158px;height:35.4px;border:1px solid #f4dce3;box-sizing:border-box;border-radius:4px;"></div>
<div class="a t" style="left:767.70px;top:864.36px;font-size:16px;color:#f4cbd7;-webkit-text-stroke:0.7px #f4cbd7;transform:scaleX(1.0425);">Remove All Filters</div>
<svg class="a" style="left:972.5px;top:358px;" width="9" height="12" viewBox="0 0 9 12"><path d="M1,1V9.5L3.3,7.5L5,11L6.5,10.3L5,7H8Z" fill="#fff" stroke="#777" stroke-width="0.8"/></svg>
<div class="a t" style="left:1065.60px;top:217.46px;font-size:16px;color:#1b1b1b;-webkit-text-stroke:0.7px #1b1b1b;transform:scaleX(1.0262);">Preview</div>
<div class="a" style="left:1177.8px;top:219.4px;width:35.5px;height:35.6px;background:#f3f3f3;border:1px solid #c8c8c8;box-sizing:border-box;border-radius:4px;"></div>
<svg class="a" style="left:1189.55px;top:230.2px;" width="12" height="14" viewBox="0 0 12 14"><path d="M2.5,1V13 M10,1L3.5,7L10,13" fill="none" stroke="#222" stroke-width="1.5"/></svg>
<div class="a" style="left:1224.4px;top:219.4px;width:35.5px;height:35.6px;background:#f3f3f3;border:1px solid #c8c8c8;box-sizing:border-box;border-radius:4px;"></div>
<svg class="a" style="left:1236.15px;top:230.2px;" width="12" height="14" viewBox="0 0 12 14"><path d="M9,1L3,7L9,13" fill="none" stroke="#222" stroke-width="1.5"/></svg>
<div class="a" style="left:1282.9px;top:219.4px;width:35.5px;height:35.6px;background:#f3f3f3;border:1px solid #c8c8c8;box-sizing:border-box;border-radius:4px;"></div>
<svg class="a" style="left:1294.65px;top:230.2px;" width="12" height="14" viewBox="0 0 12 14"><path d="M3,1L9,7L3,13" fill="none" stroke="#222" stroke-width="1.5"/></svg>
<div class="a" style="left:1329.6px;top:219.4px;width:35.5px;height:35.6px;background:#f3f3f3;border:1px solid #c8c8c8;box-sizing:border-box;border-radius:4px;"></div>
<svg class="a" style="left:1341.35px;top:230.2px;" width="12" height="14" viewBox="0 0 12 14"><path d="M9.5,1V13 M2,1L8.5,7L2,13" fill="none" stroke="#222" stroke-width="1.5"/></svg>
<div class="a" style="left:1058px;top:323.5px;width:318px;height:523.5px;background:#fdfdfd;"></div>
<div class="a" style="left:1058px;top:323.5px;width:317.5px;height:1.4px;background:#1a1a1a;"></div>
<div class="a" style="left:1058px;top:323.5px;width:1.4px;height:523.5px;background:#1a1a1a;"></div>
<div class="a" style="left:1058px;top:845.6px;width:317.5px;height:1.4px;background:#1a1a1a;"></div>
<svg class="a" style="left:1081px;top:346px;" width="64" height="28" viewBox="0 0 64 28"><rect x="1" y="2.2" width="4.6" height="20.3" fill="#174a8c"/><rect x="7.4" y="5.6" width="4.6" height="16.9" fill="#174a8c"/><rect x="13.8" y="9" width="4.4" height="13.5" fill="#174a8c"/><text x="19" y="22.5" font-family="Liberation Sans" font-weight="700" font-size="18.5" fill="#174a8c" textLength="42" lengthAdjust="spacingAndGlyphs">RISA</text><path d="M17,25.8H61" stroke="#7a8ca0" stroke-width="0.8" stroke-dasharray="1.2,0.8"/></svg>
<div class="a t" style="left:1148.00px;top:348.72px;font-size:6px;color:#333;">Company</div>
<div class="a t" style="left:1184.50px;top:348.72px;font-size:6px;color:#333;">: RISA Technologies</div>
<div class="a t" style="left:1148.00px;top:355.42px;font-size:6px;color:#333;">Designer</div>
<div class="a t" style="left:1184.50px;top:355.42px;font-size:6px;color:#333;">:</div>
<div class="a t" style="left:1148.00px;top:362.12px;font-size:6px;color:#333;">Job Number</div>
<div class="a t" style="left:1184.50px;top:362.12px;font-size:6px;color:#333;">:</div>
<div class="a t" style="left:1148.00px;top:368.82px;font-size:6px;color:#333;">Model Name</div>
<div class="a t" style="left:1184.50px;top:368.82px;font-size:6px;color:#333;">: Sample Model</div>
<div class="a" style="left:1082px;top:377.2px;width:293.5px;height:3.3px;background:#727272;"></div>
<div class="a" style="left:1082px;top:811.6px;width:293.5px;height:4px;background:#707070;"></div>
<div class="a" style="left:1082px;top:813.2px;width:293.5px;height:0.8px;background:#c8c8c8;"></div>
<div class="a t" style="left:1082.30px;top:816.42px;font-size:6px;color:#444;transform:scaleX(0.9871);">RISA-3D Version 20</div>
<div class="a t" style="left:1216.00px;top:816.42px;font-size:6px;color:#444;transform:scaleX(1.0072);">[ RISA-3D Sample Model HF/3d ]</div>
<div class="a" style="left:1388px;top:161px;width:230px;height:36px;background:#5b379b;"></div>
<div class="a t" style="left:1401.60px;top:173.16px;font-size:16px;color:#fff;-webkit-text-stroke:0.7px #fff;transform:scaleX(1.0473);">Explorer</div>
<div class="a" style="left:1388px;top:197px;width:230px;height:720px;background:#fdfdfd;"></div>
<div class="a" style="left:1605px;top:197px;width:13px;height:718px;background:#f6f6f6;"></div>
<div class="a" style="left:1388px;top:197.6px;width:217px;height:1px;background:#dcdcdc;"></div>
<svg class="a" style="left:1608.5px;top:202.5px;" width="10" height="7" viewBox="0 0 10 7"><path d="M0.5,6.5L5,0.5L9.5,6.5Z" fill="#a8a8a8"/></svg>
<div class="a" style="left:1609.4px;top:563.5px;width:7.3px;height:337px;background:#a6a6a6;border-radius:4px;"></div>
<svg class="a" style="left:1607.8px;top:905.3px;" width="10" height="7" viewBox="0 0 10 7"><path d="M0.5,0.5L5,6.5L9.5,0.5Z" fill="#a8a8a8"/></svg>
<div class="a t" style="left:1404.70px;top:210.16px;font-size:16px;color:#1b1b1b;-webkit-text-stroke:0.7px #1b1b1b;transform:scaleX(0.9953);">Results</div>
<div class="a" style="left:1467px;top:206.6px;width:91.7px;height:22.1px;background:#ececec;border-radius:11px;"></div>
<div class="a" style="left:1467px;top:206.6px;width:39.7px;height:22.1px;background:#72a8e0;border-radius:11px;"></div>
<div class="a t" style="left:1476.80px;top:210.95px;font-size:14px;color:#fff;transform:scaleX(0.8290);">Env</div>
<div class="a t" style="left:1516.35px;top:210.95px;font-size:14px;color:#c4c4c4;transform:scaleX(0.9022);">Batch</div>
<svg class="a" style="left:1575.1px;top:213.0px;" width="15" height="10" viewBox="0 0 15 10"><polyline points="2,8 7.5,2 13,8" fill="none" stroke="#222" stroke-width="1.5"/></svg>
<div class="a t" style="left:1404.60px;top:245.47px;font-size:13.5px;color:#1b1b1b;-webkit-text-stroke:0.15px #1b1b1b;transform:scaleX(0.9734);">Node Reactions</div>
<div class="a t" style="left:1404.60px;top:274.24px;font-size:13.5px;color:#1b1b1b;-webkit-text-stroke:0.15px #1b1b1b;transform:scaleX(1.0087);">Node Deflections</div>
<div class="a t" style="left:1404.60px;top:303.01px;font-size:13.5px;color:#1b1b1b;-webkit-text-stroke:0.15px #1b1b1b;transform:scaleX(1.0149);">Story Drift</div>
<div class="a t" style="left:1404.60px;top:331.78px;font-size:13.5px;color:#1b1b1b;-webkit-text-stroke:0.15px #1b1b1b;transform:scaleX(0.9680);">Member Forces</div>
<div class="a t" style="left:1404.60px;top:360.55px;font-size:13.5px;color:#1b1b1b;-webkit-text-stroke:0.15px #1b1b1b;transform:scaleX(0.9482);">Member Stresses</div>
<div class="a t" style="left:1404.60px;top:389.32px;font-size:13.5px;color:#1b1b1b;-webkit-text-stroke:0.15px #1b1b1b;transform:scaleX(0.9875);">Member Torsions</div>
<div class="a t" style="left:1404.60px;top:418.09px;font-size:13.5px;color:#1b1b1b;-webkit-text-stroke:0.15px #1b1b1b;transform:scaleX(1.0054);">Member Deflections</div>
<div class="a t" style="left:1404.60px;top:446.86px;font-size:13.5px;color:#1b1b1b;-webkit-text-stroke:0.15px #1b1b1b;transform:scaleX(0.9707);">Suggested Design</div>
<div class="a t" style="left:1404.60px;top:475.63px;font-size:13.5px;color:#1b1b1b;-webkit-text-stroke:0.15px #1b1b1b;transform:scaleX(0.9476);">Code Check</div>
<div class="a t" style="left:1404.60px;top:504.40px;font-size:13.5px;color:#1b1b1b;-webkit-text-stroke:0.15px #1b1b1b;transform:scaleX(0.9919);">Seismic Detailing</div>
<div class="a t" style="left:1404.60px;top:533.17px;font-size:13.5px;color:#1b1b1b;-webkit-text-stroke:0.15px #1b1b1b;transform:scaleX(0.9786);">Concrete Reinforcing</div>
<div class="a t" style="left:1404.60px;top:561.94px;font-size:13.5px;color:#1b1b1b;-webkit-text-stroke:0.15px #1b1b1b;transform:scaleX(0.9168);">Plate Stresses</div>
<div class="a t" style="left:1404.60px;top:590.71px;font-size:13.5px;color:#1b1b1b;-webkit-text-stroke:0.15px #1b1b1b;transform:scaleX(0.9343);">Plate Forces</div>
<div class="a t" style="left:1404.60px;top:619.48px;font-size:13.5px;color:#1b1b1b;-webkit-text-stroke:0.15px #1b1b1b;transform:scaleX(0.9421);">Plate Corner Forces</div>
<div class="a t" style="left:1404.60px;top:648.25px;font-size:13.5px;color:#1b1b1b;-webkit-text-stroke:0.15px #1b1b1b;transform:scaleX(0.9341);">Solid Stresses</div>
<div class="a t" style="left:1404.60px;top:677.02px;font-size:13.5px;color:#1b1b1b;-webkit-text-stroke:0.15px #1b1b1b;transform:scaleX(0.9827);">Solid Principals</div>
<div class="a t" style="left:1404.60px;top:705.79px;font-size:13.5px;color:#1b1b1b;-webkit-text-stroke:0.15px #1b1b1b;transform:scaleX(0.9571);">Solid Corner Forces</div>
<div class="a t" style="left:1404.60px;top:734.56px;font-size:13.5px;color:#1b1b1b;-webkit-text-stroke:0.15px #1b1b1b;transform:scaleX(0.9645);">Wall Panel Design</div>
<div class="a t" style="left:1404.60px;top:763.33px;font-size:13.5px;color:#1b1b1b;-webkit-text-stroke:0.15px #1b1b1b;transform:scaleX(0.9373);">Wall Panel Forces</div>
<div class="a t" style="left:1404.60px;top:792.10px;font-size:13.5px;color:#1b1b1b;-webkit-text-stroke:0.15px #1b1b1b;">Material TakeOff</div>
<div class="a t" style="left:1404.60px;top:820.87px;font-size:13.5px;color:#c8c8c8;transform:scaleX(0.9382);">Frequencies</div>
<div class="a t" style="left:1404.60px;top:849.64px;font-size:13.5px;color:#c8c8c8;transform:scaleX(0.9675);">Mode Shapes</div>
<div class="a t" style="left:1404.60px;top:878.41px;font-size:13.5px;color:#1b1b1b;-webkit-text-stroke:0.15px #1b1b1b;transform:scaleX(0.9601);">Connection Results</div>
<div class="a" style="left:2px;top:915px;width:1616px;height:1.5px;background:#fcfcfc;"></div>
<div class="a" style="left:2px;top:916.5px;width:1616px;height:1px;background:#cfcfcf;"></div>
<div class="a" style="left:2px;top:917.5px;width:1616px;height:1px;background:#fafafa;"></div>
<div class="a" style="left:2px;top:918.5px;width:1616px;height:21px;background:#f1f1f1;"></div>
<svg class="a" style="left:10px;top:920px;" width="19" height="19" viewBox="0 0 19 19"><circle cx="9.3" cy="9.3" r="9.1" fill="#138a3e"/><path d="M5,9.5L8,12.3L13.5,6.5" fill="none" stroke="#fff" stroke-width="1.6"/></svg>
<div class="a" style="left:33.8px;top:920.5px;width:17px;height:17px;background:#dadada;border-radius:8.5px;"></div>
<div class="a" style="left:57.2px;top:920.5px;width:17px;height:17px;background:#dadada;border-radius:8.5px;"></div>
</body></html>
